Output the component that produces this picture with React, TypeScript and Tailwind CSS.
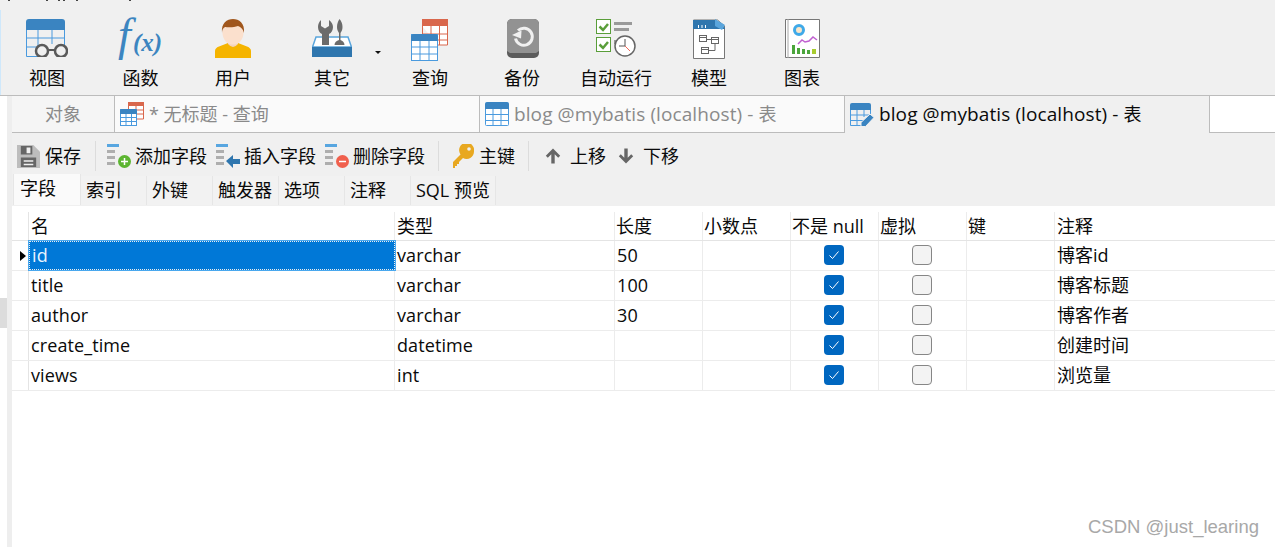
import type { ReactNode } from "react";

const font = "font-['Open_Sans','Noto_Sans_CJK_SC',sans-serif]";

function ViewIcon() {
  return (
    <svg width="42" height="38" viewBox="0 0 42 38" fill="none">
      <path d="M0 11V3a3 3 0 0 1 3-3h33a3 3 0 0 1 3 3v8z" fill="#3a84c1" />
      <path d="M.5 11v26.500H14M38.500 11v15M0 19h39M0 28h12M12 11v16M26 11v14" stroke="#4a9ade" />
      <circle cx="16" cy="32" r="6" stroke="#5a5a5a" strokeWidth="2.500" fill="#f0f0f0" />
      <circle cx="35" cy="32" r="6" stroke="#5a5a5a" strokeWidth="2.500" fill="#f0f0f0" />
      <path d="M22 31h7" stroke="#5a5a5a" strokeWidth="2" />
    </svg>
  );
}

function FunctionIcon() {
  return (
    <svg width="46" height="40" viewBox="0 0 46 40" fill="#3c85c0" fontFamily="'Liberation Serif',serif" fontStyle="italic" className="overflow-visible">
      <text x="0" y="31" fontSize="46">f</text>
      <text x="15" y="32" fontSize="25" fontWeight="700">(x)</text>
    </svg>
  );
}

function UserIcon() {
  return (
    <svg width="36" height="39" viewBox="0 0 36 39">
      <path d="M0 39v-7q0-3 4-4.500l9-3.500h10l9 3.500q4 1.500 4 4.500v7z" fill="#f5b400" />
      <path d="M13 20h10v5q-5 6-10 0z" fill="#f3d3bd" />
      <ellipse cx="18" cy="14" rx="10.500" ry="11.500" fill="#fbe0cd" />
      <path d="M7 14C6 4 12 0 18 0s12 4 11 14c-1-4-3-6-6-7-5 2-12 1-13 1-2 1-3 3-3 6z" fill="#a0561c" />
    </svg>
  );
}

function ToolsIcon() {
  return (
    <svg width="40" height="38" viewBox="0 0 40 38">
      <path d="M4 18h32l3.500 10H.5z" fill="#fff" stroke="#5aa5dc" strokeWidth="1.500" />
      <path d="M0 28h40v10H0z" fill="#2f76ae" />
      <path d="M10 26V15C7.500 14 6 11 6 8c0-3 1-5 3-7v6l4 2.500L17 7V1c2.500 2 4 4 4 7 0 3-1.500 6-4 7v11z" fill="#6b6b6b" />
      <path d="M27.500 0c2 2 3 5 3 8s-1 4.500-2 6v7c2 .5 4 2.500 4 5h-10c0-2.500 2-4.500 4.500-5v-7c-1-1.500-2-3-2-6s1-6 2.500-8z" fill="#6b6b6b" />
    </svg>
  );
}

function QueryIcon() {
  return (
    <svg width="38" height="42" viewBox="0 0 38 42" fill="none">
      <path d="M11 7V0h26v26H27" fill="#fff" />
      <path d="M11 0h26v7H11z" fill="#d9674c" />
      <path d="M11.500 7v8M36.500 7v19H26M11 15h26M11 21h26M20 7v8M28.500 7v19" stroke="#d9674c" />
      <rect x=".5" y="15.500" width="26" height="26" fill="#fff" stroke="#4a9ade" />
      <path d="M0 18a3 3 0 0 1 3-3h21a3 3 0 0 1 3 3v4H0z" fill="#3a84c1" />
      <path d="M0 28h27M0 35h27M9 22v20M18 22v20" stroke="#4a9ade" />
    </svg>
  );
}

function BackupIcon() {
  return (
    <svg width="32" height="39" viewBox="0 0 32 39" fill="none" className="ml-[2px]">
      <rect width="32" height="39" rx="5" fill="#5c5c5c" />
      <path d="M0 5a5 5 0 0 1 5-5h22a5 5 0 0 1 5 5v27l-3 2H3l-3-2z" fill="#929292" />
      <path d="M11 11.500a8.500 8.500 0 1 1-2.500 8" stroke="#f0f0f0" strokeWidth="3" />
      <path d="M5 16l9.500-4.500-.5 8z" fill="#f0f0f0" />
    </svg>
  );
}

function AutoRunIcon() {
  return (
    <svg width="41" height="39" viewBox="0 0 41 39" fill="none">
      <rect x=".5" y=".5" width="14" height="14" fill="#fff" stroke="#5a9e3a" />
      <rect x=".5" y="18.500" width="14" height="14" fill="#fff" stroke="#5a9e3a" />
      <path d="M3.500 7.500l3.500 3.500 5-6M3.500 25.500l3.500 3.500 5-6" stroke="#5a9e3a" strokeWidth="2.500" />
      <path d="M18 3h18v3H18zM18 9h15v3H18zM18 21h6v4h-6z" fill="#9a9a9a" />
      <circle cx="29" cy="27" r="10" fill="#fff" stroke="#666" strokeWidth="1.500" />
      <path d="M29 20v7h-6" stroke="#555" />
      <path d="M29 27l5 5" stroke="#f06a5a" />
    </svg>
  );
}

function ModelIcon() {
  return (
    <svg width="32" height="40" viewBox="0 0 32 40" fill="none">
      <path d="M.5 1h24l7 6v32.500H.5z" fill="#fff" stroke="#777" />
      <path d="M0 1h23l9 8v1H0z" fill="#2f76ae" />
      <path d="M22 0l10 6-3 5-7-4z" fill="#5aa5dc" />
      <path d="M5 6h1v3H5zM8.500 6h1v3h-1zM12 6h1v3h-1z" fill="#fff" />
      <rect x="6.500" y="16.500" width="7" height="6" stroke="#666" />
      <rect x="18.500" y="18.500" width="7" height="6" stroke="#666" />
      <rect x="8.500" y="28.500" width="7" height="6" stroke="#666" />
      <path d="M6.500 18.500h7M18.500 20.500h7M8.500 30.500h7M13.500 20.500h5M22 24.500v7h-6" stroke="#666" />
    </svg>
  );
}

function ChartIcon() {
  return (
    <svg width="35" height="39" viewBox="0 0 35 39" fill="none">
      <path d="M.5.5h34v38H.5z" fill="#fff" stroke="#777" />
      <path d="M3 0v39" stroke="#aaa" />
      <circle cx="14" cy="11" r="4.500" stroke="#3fa9e8" strokeWidth="3" fill="#fbe6c8" />
      <path d="M13 25l4-4 3 2 4-1 4-4 4 3" stroke="#c060d0" strokeWidth="1.500" />
      <path d="M7 26h3v9H7zM12 29h3v6h-3zM17 30h3v5h-3zM22 31h3v4h-3z" fill="#4ba53c" />
      <path d="M27 30h4v5h-4z" fill="#a8cc30" />
    </svg>
  );
}

function TableIcon() {
  return (
    <svg width="24" height="24" viewBox="0 0 24 24" fill="none">
      <rect x=".5" y=".5" width="23" height="23" rx="1" fill="#fff" stroke="#4a9ade" />
      <path d="M0 3a3 3 0 0 1 3-3h18a3 3 0 0 1 3 3v4H0z" fill="#3a84c1" />
      <path d="M0 12.500h24M0 18.500h24M8 7v17M16 7v17" stroke="#4a9ade" />
    </svg>
  );
}

function QueryTabIcon() {
  return (
    <svg width="24" height="24" viewBox="0 0 24 24" fill="none">
      <path d="M8 0h16v17H15V8H8z" fill="#fff" />
      <path d="M8 0h16v4H8z" fill="#d9674c" />
      <path d="M8.500 4v4M23.500 4v13H15M8 8h16M15 12h9M16 4v13" stroke="#d9674c" />
      <rect x=".5" y="7.500" width="16" height="16" fill="#fff" stroke="#4a9ade" />
      <path d="M0 9a2 2 0 0 1 2-2h13a2 2 0 0 1 2 2v3H0z" fill="#3a84c1" />
      <path d="M0 15.500h17M0 19.500h17M6 12v12M11.500 12v12" stroke="#4a9ade" />
    </svg>
  );
}

function TableEditIcon() {
  return (
    <svg width="24" height="24" viewBox="0 0 24 24" fill="none">
      <path d="M.5 6v16.500H13M20.500 6v5M0 12h20M0 17.500h14M7 6v16M14 6v8" stroke="#4a9ade" />
      <path d="M0 2a2 2 0 0 1 2-2h17a2 2 0 0 1 2 2v5H0z" fill="#3a84c1" />
      <path d="M20 11l4 3.500-8.500 9H11v-4z" fill="#3a84c1" stroke="#f0f0f0" />
    </svg>
  );
}

function SaveIcon() {
  return (
    <svg width="23" height="23" viewBox="0 0 24 24">
      <path d="M0 0h17l7 7v17H0z" fill="#bdbdbd" />
      <path d="M4 1h12v9H4zM4 13h16v10H4z" fill="#666" />
      <path d="M10 2.500h4v6h-4zM7 16h10v1.500H7zM7 19.500h10V21H7z" fill="#f0f0f0" />
    </svg>
  );
}

function FieldBase({ children }: { children: ReactNode }) {
  return (
    <svg width="24" height="24" viewBox="0 0 24 24">
      <path d="M0 0h12v3H0z" fill="#58a6e0" />
      <path d="M0 6h8v3H0zM0 12h8v3H0zM0 18h8v3H0z" fill="#aeaeae" />
      {children}
    </svg>
  );
}

function AddFieldIcon() {
  return (
    <FieldBase>
      <circle cx="17.500" cy="17.500" r="6.500" fill="#5cb531" />
      <path d="M14 17.500h7M17.500 14v7" stroke="#fff" strokeWidth="1.500" />
    </FieldBase>
  );
}

function InsertFieldIcon() {
  return (
    <FieldBase>
      <path d="M10 17l7-6v4h7v5h-7v4z" fill="#2f76ae" />
    </FieldBase>
  );
}

function DeleteFieldIcon() {
  return (
    <FieldBase>
      <circle cx="17.500" cy="17.500" r="6.500" fill="#f0604d" />
      <path d="M14 17.500h7" stroke="#fff" strokeWidth="1.500" />
    </FieldBase>
  );
}

function KeyIcon() {
  return (
    <svg width="21" height="24" viewBox="0 0 21 24">
      <path d="M21 7.500a7.500 7.500 0 0 1-11 6.600L6 18v2H4v2H2v2H0v-6l7.500-7.500A7.500 7.500 0 1 1 21 7.500z" fill="#e8a820" />
      <circle cx="16" cy="5" r="1.800" fill="#f0f0f0" />
    </svg>
  );
}

function ArrowIcon({ down }: { down?: boolean }) {
  return (
    <svg width="16" height="16" viewBox="0 0 16 16" className={down ? "rotate-180" : ""}>
      <path d="M8 .5L.8 7.700l2 2L6.300 6.200V15.500h3.400V6.200l3.500 3.500 2-2z" fill="#666" />
    </svg>
  );
}

const tools: { label: string; icon: ReactNode; w: string; more?: boolean }[] = [
  { label: "视图", icon: <ViewIcon />, w: "w-[94px]" },
  { label: "函数", icon: <FunctionIcon />, w: "w-[93px]" },
  { label: "用户", icon: <UserIcon />, w: "w-[92px]" },
  { label: "其它", icon: <ToolsIcon />, w: "w-[106px]", more: true },
  { label: "查询", icon: <QueryIcon />, w: "w-[90px]" },
  { label: "备份", icon: <BackupIcon />, w: "w-[94px]" },
  { label: "自动运行", icon: <AutoRunIcon />, w: "w-[94px]" },
  { label: "模型", icon: <ModelIcon />, w: "w-[92px]" },
  { label: "图表", icon: <ChartIcon />, w: "w-[94px]" },
];

const subTabs = [
  { label: "索引", w: "w-[66px]" },
  { label: "外键", w: "w-[66px]" },
  { label: "触发器", w: "w-[66px]" },
  { label: "选项", w: "w-[66px]" },
  { label: "注释", w: "w-[66px]" },
  { label: "SQL 预览", w: "w-[85px]" },
];

const columns = [
  { label: "名", w: "w-[366px]" },
  { label: "类型", w: "w-[220px]" },
  { label: "长度", w: "w-[88px]" },
  { label: "小数点", w: "w-[88px]" },
  { label: "不是 null", w: "w-[88px]" },
  { label: "虚拟", w: "w-[88px]" },
  { label: "键", w: "w-[88px]" },
];

const rows = [
  { name: "id", type: "varchar", len: "50", comment: "博客id" },
  { name: "title", type: "varchar", len: "100", comment: "博客标题" },
  { name: "author", type: "varchar", len: "30", comment: "博客作者" },
  { name: "create_time", type: "datetime", len: "", comment: "创建时间" },
  { name: "views", type: "int", len: "", comment: "浏览量" },
];

function Sep() {
  return <div className="w-px h-[30px] bg-[#dcdcdc]" />;
}

function ToolButton({ icon, label, className }: { icon: ReactNode; label: string; className?: string }) {
  return (
    <div className={`flex items-center gap-1 ${className ?? ""}`}>
      {icon}
      <span>{label}</span>
    </div>
  );
}

function Check({ on }: { on?: boolean }) {
  if (on) {
    return (
      <div className="w-5 h-5 rounded-[4px] bg-[#0067c0] flex items-center justify-center">
        <svg width="12" height="10" viewBox="0 0 12 10" fill="none">
          <path d="M1.500 5.500L4.500 8.500 10.500 1.500" stroke="#fff" strokeWidth="1" />
        </svg>
      </div>
    );
  }
  return <div className="w-5 h-5 rounded-[4px] bg-[#f3f3f3] border border-[#868686]" />;
}

function Cell({ w, children, className }: { w: string; children?: ReactNode; className?: string }) {
  return (
    <div className={`${w} shrink-0 h-full border-r border-[#ececec] flex items-center whitespace-nowrap ${className ?? "pl-[2px]"}`}>
      {children}
    </div>
  );
}

function BlogTitle() {
  return (
    <span className="text-[19px] tracking-[0.1px]">
      blog @mybatis (localhost) - <span className="text-[18px]">表</span>
    </span>
  );
}

export default function App() {
  return (
    <div className={`${font} relative w-[1275px] h-[547px] overflow-hidden flex flex-col bg-white text-[18px] text-[#0a0a0a]`}>
      {/* main toolbar */}
      <div className="h-[95px] shrink-0 bg-[#f0f0f0] relative">
        {[8, 46, 58, 63, 76, 129].map((x) => (
          <div key={x} className="absolute top-0 w-[2px] h-px bg-[#444]" style={{ left: x }} />
        ))}
        <div className="absolute left-0 top-[10px] bottom-0 w-px bg-[#cfe8fb]" />
        <div className="flex h-full">
          {tools.map((t) => (
            <div key={t.label} className={`${t.w} shrink-0 flex flex-col items-center relative`}>
              <div className="h-[62px] pt-[19px] flex items-start justify-center">{t.icon}</div>
              <div className="leading-[24px] mt-[4px] whitespace-nowrap">{t.label}</div>
              {t.more && <div className="absolute left-[96px] top-[51px] border-x-[3px] border-x-transparent border-t-[3px] border-t-[#111]" />}
            </div>
          ))}
        </div>
      </div>

      <div className="flex-1 flex min-h-0 border-t border-[#bcbcbc]">
        {/* left edge */}
        <div className="w-[7px] shrink-0 bg-white">
          <div className="h-[30px] mt-[202px] bg-[#dcdcdc]" />
        </div>
        <div className="w-[5px] shrink-0 bg-[#eeeeee]" />

        <div className="flex-1 min-w-0 flex flex-col">
          {/* document tabs */}
          <div className="h-[37px] shrink-0 flex">
            <div className="w-[103px] bg-[#f5f5f5] border-r border-b border-[#bcbcbc] flex items-center justify-center text-[#8a8a8a]">对象</div>
            <div className="w-[365px] bg-[#fafafa] border-r border-b border-[#bcbcbc] flex items-center gap-[5px] pl-[5px] text-[#8a8a8a] whitespace-nowrap">
              <QueryTabIcon />
              <span>* 无标题 - 查询</span>
            </div>
            <div className="w-[365px] bg-[#fafafa] border-r border-b border-[#bcbcbc] flex items-center gap-[5px] pl-[5px] text-[#8a8a8a] whitespace-nowrap">
              <TableIcon />
              <BlogTitle />
            </div>
            <div className="w-[365px] bg-[#f0f0f0] border-r border-[#bcbcbc] flex items-center gap-[5px] pl-[5px] whitespace-nowrap">
              <TableEditIcon />
              <BlogTitle />
            </div>
            <div className="flex-1 bg-white border-b border-[#bcbcbc]" />
          </div>

          {/* table designer toolbar */}
          <div className="h-[42px] shrink-0 bg-[#f0f0f0] flex items-center whitespace-nowrap pt-[4px]">
            <ToolButton icon={<SaveIcon />} label="保存" className="ml-[5px] w-[78px] gap-[5px]" />
            <Sep />
            <ToolButton icon={<AddFieldIcon />} label="添加字段" className="ml-[11px] w-[109px]" />
            <ToolButton icon={<InsertFieldIcon />} label="插入字段" className="w-[109px]" />
            <ToolButton icon={<DeleteFieldIcon />} label="删除字段" className="w-[113px]" />
            <Sep />
            <ToolButton icon={<KeyIcon />} label="主键" className="ml-[14px] w-[75px] gap-[5px]" />
            <Sep />
            <div className="flex items-center gap-[9px] ml-[16px] w-[73px]"><ArrowIcon /><span>上移</span></div>
            <div className="flex items-center gap-[9px]"><ArrowIcon down /><span>下移</span></div>
          </div>

          {/* sub tabs */}
          <div className="h-[30px] shrink-0 bg-[#f0f0f0] flex items-end">
            <div className="w-[68px] ml-px h-[31px] bg-[#fafafa] border-x border-[#e6e6e6] pl-[6px] leading-[28px] shrink-0">字段</div>
            {subTabs.map((t) => (
              <div key={t.label} className={`${t.w} h-[29px] shrink-0 bg-[#f2f2f2] border-r border-[#e6e6e6] pl-[5px] leading-[28px] whitespace-nowrap`}>
                {t.label}
              </div>
            ))}
          </div>

          {/* fields grid */}
          <div className="flex-1 bg-white pt-[6px] border-t border-[#f0f0f0]">
            <div className="h-[29px] flex border-b border-[#e4e4e4]">
              <div className="w-[17px] shrink-0 border-r border-[#e4e4e4]" />
              {columns.map((c, i) => (
                <Cell key={c.label} w={c.w} className={i < 2 ? "pl-[2px] border-[#e4e4e4]" : "pl-px border-[#e4e4e4]"}>{c.label}</Cell>
              ))}
              <div className="flex-1 flex items-center pl-[2px]">注释</div>
            </div>
            {rows.map((r, i) => (
              <div key={r.name} className="h-[30px] flex border-b border-[#ececec] tracking-[0.1px]">
                <div className="w-[17px] shrink-0 border-r border-[#e4e4e4] flex items-center justify-end pr-[2px]">
                  {i === 0 && <div className="border-y-[5.500px] border-y-transparent border-l-[6px] border-l-black" />}
                </div>
                <Cell w={columns[0].w} className={i === 0 ? "pl-[2px] bg-[#0078d7] text-[#e8f4ff] border border-dotted border-[#3a2a10] outline outline-1 outline-[#4aa8ee]" : undefined}>
                  {r.name}
                </Cell>
                <Cell w={columns[1].w}>{r.type}</Cell>
                <Cell w={columns[2].w}>{r.len}</Cell>
                <Cell w={columns[3].w} />
                <Cell w={columns[4].w} className="justify-center pr-px pb-px"><Check on /></Cell>
                <Cell w={columns[5].w} className="justify-center pr-px pb-px"><Check /></Cell>
                <Cell w={columns[6].w} />
                <div className="flex-1 flex items-center pl-[2px] tracking-normal">{r.comment}</div>
              </div>
            ))}
          </div>
        </div>
      </div>

      {/* watermark */}
      <div className="absolute left-[1088px] top-[516px] font-['Liberation_Sans',sans-serif] text-[18.5px] leading-[22px] text-[#a8a8a8]">
        CSDN @just_learing
      </div>
    </div>
  );
}
